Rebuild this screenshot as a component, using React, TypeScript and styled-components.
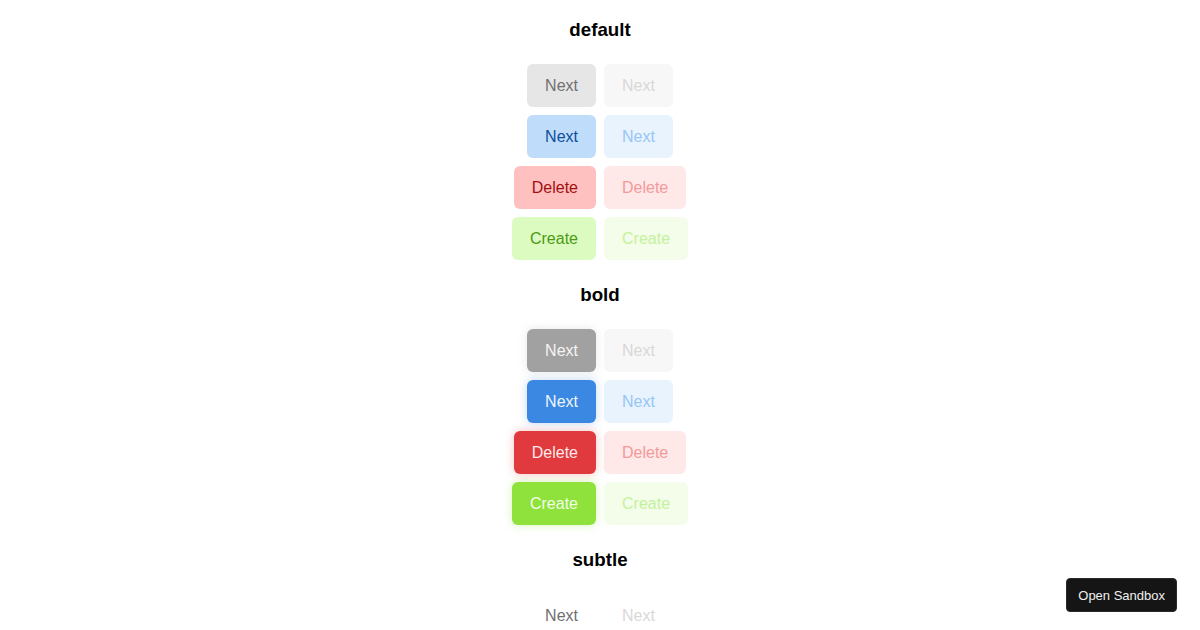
import React from "react";
import styled, { createGlobalStyle, css } from "styled-components";

const Global = createGlobalStyle`
  html, body { margin: 0; padding: 0; background: #fff; }
  body { font-family: "Liberation Sans", Arial, sans-serif; }
`;

type Tone = "gray" | "blue" | "red" | "green";
type Variant = "default" | "bold" | "subtle";

const palette: Record<Variant, Record<Tone, { bg: string; fg: string; shadow: string }>> = {
  default: {
    gray: { bg: "#e6e6e6", fg: "#707070", shadow: "none" },
    blue: { bg: "#bfdcfa", fg: "#0b4f9c", shadow: "none" },
    red: { bg: "#ffc0c0", fg: "#a30e10", shadow: "none" },
    green: { bg: "#dcfbc0", fg: "#4b9a14", shadow: "none" },
  },
  bold: {
    gray: { bg: "#a1a1a1", fg: "#f4f4f4", shadow: "0 0 10px rgba(160,160,160,0.25)" },
    blue: { bg: "#3a88e1", fg: "#eef5fd", shadow: "0 0 10px rgba(58,136,225,0.3)" },
    red: { bg: "#e03a3e", fg: "#fde9e9", shadow: "0 0 10px rgba(224,58,62,0.3)" },
    green: { bg: "#8ee23b", fg: "#f3fde9", shadow: "0 0 10px rgba(142,226,59,0.35)" },
  },
  subtle: {
    gray: { bg: "transparent", fg: "#707070", shadow: "none" },
    blue: { bg: "transparent", fg: "#0b4f9c", shadow: "none" },
    red: { bg: "transparent", fg: "#a30e10", shadow: "none" },
    green: { bg: "transparent", fg: "#4b9a14", shadow: "none" },
  },
};

const disabledPalette: Record<Variant, Record<Tone, { bg: string; fg: string }>> = {
  default: {
    gray: { bg: "#f7f7f7", fg: "#d8d8d8" },
    blue: { bg: "#e8f3fe", fg: "#98c5f3" },
    red: { bg: "#ffe8e8", fg: "#f39a9b" },
    green: { bg: "#f3fde9", fg: "#c4f29b" },
  },
  bold: {
    gray: { bg: "#f7f7f7", fg: "#d8d8d8" },
    blue: { bg: "#e8f3fe", fg: "#98c5f3" },
    red: { bg: "#ffe8e8", fg: "#f39a9b" },
    green: { bg: "#f3fde9", fg: "#c4f29b" },
  },
  subtle: {
    gray: { bg: "transparent", fg: "#d8d8d8" },
    blue: { bg: "transparent", fg: "#98c5f3" },
    red: { bg: "transparent", fg: "#f39a9b" },
    green: { bg: "transparent", fg: "#c4f29b" },
  },
};

const Page = styled.main`
  display: flex;
  flex-direction: column;
  align-items: center;
  padding-top: 19px;
`;

const Section = styled.section`
  display: flex;
  flex-direction: column;
  align-items: center;
  margin-bottom: 24px;
`;

const Heading = styled.h3`
  margin: 0 0 23px;
  font-size: 18.72px;
  line-height: 22px;
  font-weight: 700;
  color: #000;
`;

const Rows = styled.div`
  display: flex;
  flex-direction: column;
  gap: 8px;
`;

const Row = styled.div`
  display: flex;
  justify-content: center;
  gap: 8px;
`;

const Half = styled.div<{ $side: "left" | "right" }>`
  width: 100px;
  display: flex;
  justify-content: ${(p) => (p.$side === "left" ? "flex-end" : "flex-start")};
`;

const Button = styled.button<{ $bg: string; $fg: string; $shadow: string }>`
  height: 43px;
  padding: 0 18px;
  border: none;
  border-radius: 6px;
  font-family: "Liberation Sans", Arial, sans-serif;
  font-size: 16px;
  line-height: 19px;
  cursor: pointer;
  ${(p) => css`
    background: ${p.$bg};
    color: ${p.$fg};
    box-shadow: ${p.$shadow};
  `}
  &:disabled { cursor: not-allowed; }
`;

const SandboxButton = styled.button`
  position: fixed;
  right: 23px;
  bottom: 18px;
  height: 34px;
  padding: 0 11px;
  background: #151515;
  color: #f0f0f0;
  border: 1px solid #2a2a2a;
  border-radius: 4px;
  font-family: "Liberation Sans", Arial, sans-serif;
  font-size: 13px;
`;

const items: { tone: Tone; label: string }[] = [
  { tone: "gray", label: "Next" },
  { tone: "blue", label: "Next" },
  { tone: "red", label: "Delete" },
  { tone: "green", label: "Create" },
];

const variants: Variant[] = ["default", "bold", "subtle"];

export default function App() {
  return (
    <>
      <Global />
      <Page>
        {variants.map((v) => (
          <Section key={v}>
            <Heading>{v}</Heading>
            <Rows>
              {items.map((it, i) => {
                const a = palette[v][it.tone];
                const d = disabledPalette[v][it.tone];
                return (
                  <Row key={i}>
                    <Half $side="left">
                      <Button $bg={a.bg} $fg={a.fg} $shadow={a.shadow}>
                        {it.label}
                      </Button>
                    </Half>
                    <Half $side="right">
                      <Button disabled $bg={d.bg} $fg={d.fg} $shadow="none">
                        {it.label}
                      </Button>
                    </Half>
                  </Row>
                );
              })}
            </Rows>
          </Section>
        ))}
      </Page>
      <SandboxButton>Open Sandbox</SandboxButton>
    </>
  );
}
